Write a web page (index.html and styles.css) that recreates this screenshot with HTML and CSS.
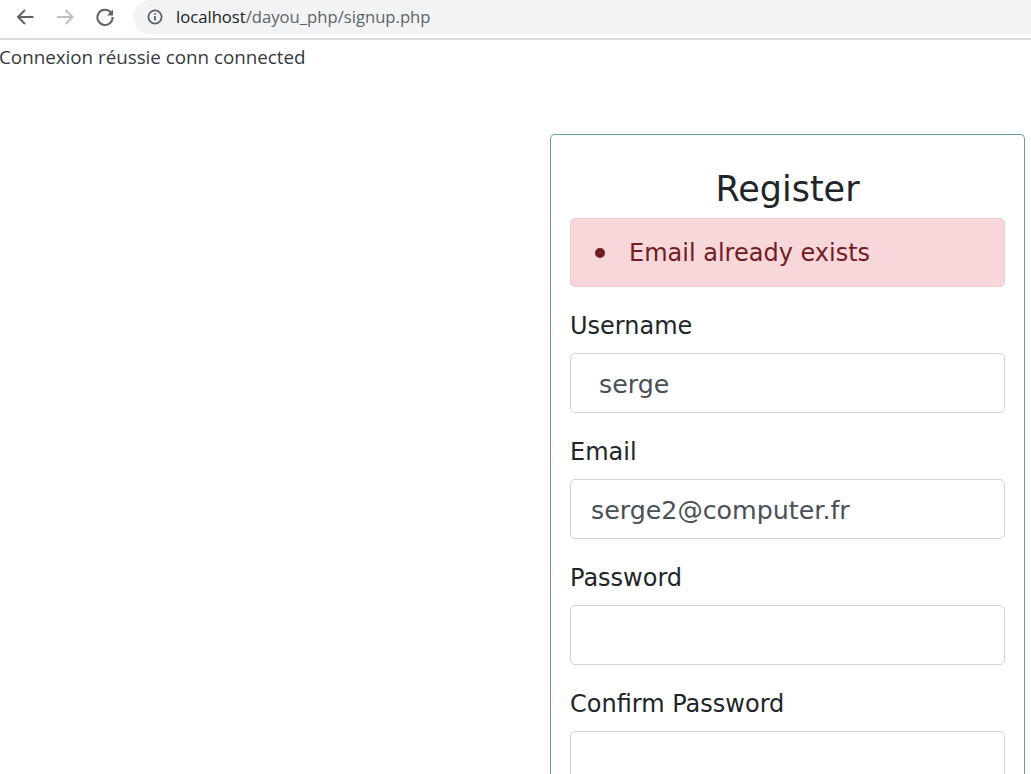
FILE: index.html
```html
<!DOCTYPE html>
<html lang="en">
<head>
    <meta charset="UTF-8">
    <meta name="viewport" content="width=device-width, initial-scale=1.0">
    <title>Register</title>
    <link rel="stylesheet" href="styles.css">
</head>
<body>
    <div class="toolbar">
        <svg class="nav-icon" viewBox="0 0 20 20"><path d="M18.5 10H3.5M10 3l-7 7 7 7" fill="none" stroke="#5f6368" stroke-width="2"/></svg>
        <svg class="nav-icon" viewBox="0 0 20 20"><path d="M2 10h15M10.5 3l7 7-7 7" fill="none" stroke="#bdc1c6" stroke-width="2"/></svg>
        <svg class="nav-icon" viewBox="0 0 20 20"><path d="M15.9 5.6A7.6 7.6 0 1 0 17.6 10" fill="none" stroke="#5f6368" stroke-width="2"/><path d="M18 2.5V8.5h-6z" fill="#5f6368"/></svg>
        <div class="address-bar">
            <svg class="info-icon" viewBox="0 0 16 16"><circle cx="8" cy="8" r="6.6" fill="none" stroke="#5f6368" stroke-width="1.8"/><path d="M8 7v4.6M8 4.2v1.6" stroke="#5f6368" stroke-width="1.8"/></svg>
            <span class="url"><span class="url-host">localhost</span>/dayou_php/signup.php</span>
        </div>
    </div>

    <p class="status">Connexion réussie conn connected</p>

    <div class="card-row">
        <form class="card">
            <h1>Register</h1>
            <ul class="alert">
                <li>Email already exists</li>
            </ul>
            <div class="form-group">
                <label for="username">Username</label>
                <input type="text" id="username" value=" serge">
            </div>
            <div class="form-group">
                <label for="email">Email</label>
                <input type="email" id="email" value="serge2@computer.fr">
            </div>
            <div class="form-group">
                <label for="password">Password</label>
                <input type="password" id="password">
            </div>
            <div class="form-group">
                <label for="confirm">Confirm Password</label>
                <input type="password" id="confirm">
            </div>
        </form>
    </div>
</body>
</html>
```

FILE: styles.css
```css
html, body {
    height: 100%;
}
body {
    margin: 0;
    overflow: hidden;
    background-color: #fff;
    color: #212529;
    font-family: "DejaVu Sans", sans-serif;
}
.toolbar {
    display: flex;
    align-items: center;
    height: 38px;
    padding-left: 15px;
    gap: 20px;
    border-bottom: 2px solid #dadce0;
}
.nav-icon {
    width: 20px;
    height: 20px;
    flex: none;
    margin-top: -4px;
}
.address-bar {
    display: flex;
    align-items: center;
    flex: 1;
    height: 34px;
    margin-top: -4px;
    margin-left: -2px;
    padding-left: 14px;
    box-sizing: border-box;
    padding-bottom: 1px;
    background-color: #f1f3f4;
    border-radius: 17px 0 0 17px;
}
.info-icon {
    width: 16px;
    height: 16px;
    margin-right: 13px;
}
.url {
    font-family: "Open Sans", sans-serif;
    font-size: 16.65px;
    color: #5f6368;
}
.url-host {
    color: #202124;
}
.status {
    margin: 0 0 0 -1px;
    padding-top: 5px;
    font-family: "Open Sans", sans-serif;
    font-size: 18.8px;
    line-height: 24px;
    color: #343a40;
}
.card-row {
    display: flex;
    justify-content: flex-end;
    padding: 65px 6px 0 0;
}
.card {
    width: 475px;
    height: 640px;
    box-sizing: border-box;
    padding: 30px 19px 0;
    overflow: hidden;
    border: 1px solid #6b9e9e;
    border-bottom: none;
    border-radius: 5px 5px 0 0;
}
h1 {
    margin: 0 0 4px;
    font-size: 35px;
    font-weight: 400;
    line-height: 49px;
    text-align: center;
}
.alert {
    margin: 0 0 21px;
    padding: 16px 20px 15px 24px;
    height: 69px;
    box-sizing: border-box;
    background-color: #f8d7da;
    border: 1px solid #eccdd1;
    border-radius: 5px;
    color: #721c24;
    font-size: 24px;
    line-height: 36px;
    list-style: none;
}
.alert li {
    display: flex;
    align-items: center;
    gap: 24px;
}
.alert li::before {
    content: "";
    width: 10px;
    height: 10px;
    border-radius: 50%;
    background-color: #721c24;
}
.form-group {
    margin-bottom: 21px;
}
label {
    display: block;
    margin-bottom: 9px;
    font-size: 24px;
    line-height: 36px;
}
input {
    display: block;
    width: 100%;
    height: 60px;
    box-sizing: border-box;
    padding: 2px 20px 0;
    background-color: #fff;
    border: 1px solid #ced4da;
    border-radius: 5px;
    color: #495057;
    font-family: inherit;
    font-size: 25.3px;
}
```
